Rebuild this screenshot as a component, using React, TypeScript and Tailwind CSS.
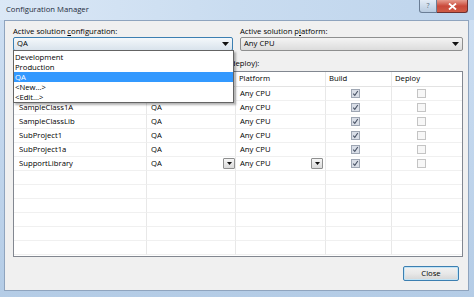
const rows = [
  { name: "ClassLibrary1", build: true },
  { name: "SampleClass1A", build: true },
  { name: "SampleClassLib", build: true },
  { name: "SubProject1", build: true },
  { name: "SubProject1a", build: true },
  { name: "SupportLibrary", build: true, active: true },
];

function Arrow() {
  return (
    <svg width="7" height="4" viewBox="0 0 7 4">
      <path d="M0 0h7L3.5 4z" fill="#111" />
    </svg>
  );
}

function Combo({ value, focused }: { value: string; focused?: boolean }) {
  return (
    <div
      className={
        "h-[14px] flex items-center justify-between pl-[3px] pr-[3px] border rounded-[2px] bg-gradient-to-b " +
        (focused
          ? "border-[#3c7fb1] from-[#f4f8fb] to-[#d9e3ec]"
          : "border-[#8e8f8f] from-[#f4f4f4] to-[#dcdcdc]")
      }
    >
      <span>{value}</span>
      <Arrow />
    </div>
  );
}

function MiniDrop() {
  return (
    <div className="w-[12px] h-[11px] flex items-center justify-center border border-[#8e8f8f] rounded-[1px] bg-gradient-to-b from-[#f6f6f6] to-[#dadada]">
      <svg width="5" height="3" viewBox="0 0 5 3">
        <path d="M0 0h5L2.5 3z" fill="#111" />
      </svg>
    </div>
  );
}

function Check({ on }: { on: boolean }) {
  return (
    <div
      className={
        "w-[9px] h-[9px] border flex items-center justify-center " +
        (on ? "border-[#9ea6b3] bg-[#d9dee7]" : "border-[#c4c4c4] bg-[#f7f7f7]")
      }
    >
      {on && (
        <svg width="7" height="7" viewBox="0 0 7 7">
          <path d="M1.2 3.6l1.6 1.8L5.8 1" stroke="#4a5466" strokeWidth="1.1" fill="none" />
        </svg>
      )}
    </div>
  );
}

export default function App() {
  return (
    <div
      className="w-[474px] h-[297px] flex flex-col bg-gradient-to-b from-[#cfe0f3] to-[#b4cce6] relative text-[7.7px] text-[#000] overflow-hidden"
      style={{ fontFamily: '"Open Sans", "Noto Sans", sans-serif' }}
    >
      <div className="h-[20px] flex items-center pl-[6px] text-[#1e2c3c] bg-gradient-to-r from-[#dbe8f6] via-[#c9dcf0] to-[#bed4ec]">
        Configuration Manager
      </div>
      <div className="absolute top-0 right-[6px] flex h-[13px]">
        <div className="w-[18px] flex items-center justify-center border border-[#6a7d95] border-t-0 rounded-bl-[3px] bg-gradient-to-b from-[#e3ecf6] to-[#b8cbe0] text-[7px] text-[#5b6b80]">
          ?
        </div>
        <div className="w-[31px] flex items-center justify-center border border-[#6e3030] border-t-0 border-l-0 rounded-br-[3px] bg-gradient-to-b from-[#e59c8f] via-[#c9493b] to-[#cf5b45]">
          <svg width="9" height="7" viewBox="0 0 9 7">
            <path d="M1 0.5l7 6M8 0.5l-7 6" stroke="#fff" strokeWidth="1.8" />
          </svg>
        </div>
      </div>

      <div className="flex-1 ml-[4px] mr-[5px] mb-[6px] bg-[#f0f0f0] border border-[#8fa4be] flex flex-col pl-[8px] pr-[5px] pt-[5px] relative">
        <div className="flex gap-[7px]">
          <div className="w-[220px]">
            <div className="h-[10px] leading-[10px]">
              Active solution <span className="underline">c</span>onfiguration:
            </div>
            <div className="mt-[1px]">
              <Combo value="QA" focused />
            </div>
          </div>
          <div className="flex-1">
            <div className="h-[10px] leading-[10px]">
              Active solution p<span className="underline">l</span>atform:
            </div>
            <div className="mt-[1px]">
              <Combo value="Any CPU" />
            </div>
          </div>
        </div>

        <div className="mt-[7px] h-[10px] leading-[10px] whitespace-nowrap">
          Project contexts (check the project configurations to build or deploy):
        </div>

        <div className="mt-[3px] h-[186px] border border-[#828790] bg-white overflow-hidden">
          <div className="grid grid-cols-[133px_89px_90px_66px_1fr]">
            {["Project", "Configuration", "Platform", "Build", "Deploy"].map((h, i) => (
              <div
                key={h}
                className={
                  "h-[15px] flex items-center pl-[3px] border-b border-[#e3e3e3] " +
                  (i < 4 ? "border-r border-r-[#e8e8e8]" : "")
                }
              >
                {h}
              </div>
            ))}
            {Array.from({ length: 12 }).map((_, r) => {
              const row = rows[r];
              return [
                <div key={r + "a"} className="h-[14px] flex items-center pl-[5px] border-b border-[#f0f0f0] border-r border-r-[#e8e8e8]">
                  {row?.name}
                </div>,
                <div key={r + "b"} className="h-[14px] flex items-center justify-between pl-[4px] pr-[0px] border-b border-[#f0f0f0] border-r border-r-[#e8e8e8]">
                  <span>{row ? "QA" : ""}</span>
                  {row?.active && <MiniDrop />}
                </div>,
                <div key={r + "c"} className="h-[14px] flex items-center justify-between pl-[4px] pr-[2px] border-b border-[#f0f0f0] border-r border-r-[#e8e8e8]">
                  <span>{row ? "Any CPU" : ""}</span>
                  {row?.active && <MiniDrop />}
                </div>,
                <div key={r + "d"} className="h-[14px] flex items-center pl-[25px] border-b border-[#f0f0f0] border-r border-r-[#e8e8e8]">
                  {row && <Check on={row.build} />}
                </div>,
                <div key={r + "e"} className="h-[14px] flex items-center pl-[25px] border-b border-[#f0f0f0]">
                  {row && <Check on={false} />}
                </div>,
              ];
            })}
          </div>
        </div>

        <div className="mt-auto mb-[9px] flex justify-end pr-[4px]">
          <div className="w-[56px] h-[15px] flex items-center justify-center border border-[#3c7fb1] rounded-[2px] bg-gradient-to-b from-[#f2f2f2] via-[#e8e8e8] to-[#d6d6d6] shadow-[inset_0_0_0_1px_#c2e4f6]">
            Close
          </div>
        </div>

        <div className="absolute left-[8px] top-[29px] w-[221px] border border-[#646464] bg-white pt-[1px] shadow-[2px_2px_2px_rgba(0,0,0,0.3)]">
          {["Development", "Production", "QA", "<New...>", "<Edit...>"].map((t) => (
            <div
              key={t}
              className={
                "h-[10px] leading-[10px] pl-[1px] " + (t === "QA" ? "bg-[#3399ff] text-white" : "")
              }
            >
              {t}
            </div>
          ))}
        </div>
      </div>
    </div>
  );
}
